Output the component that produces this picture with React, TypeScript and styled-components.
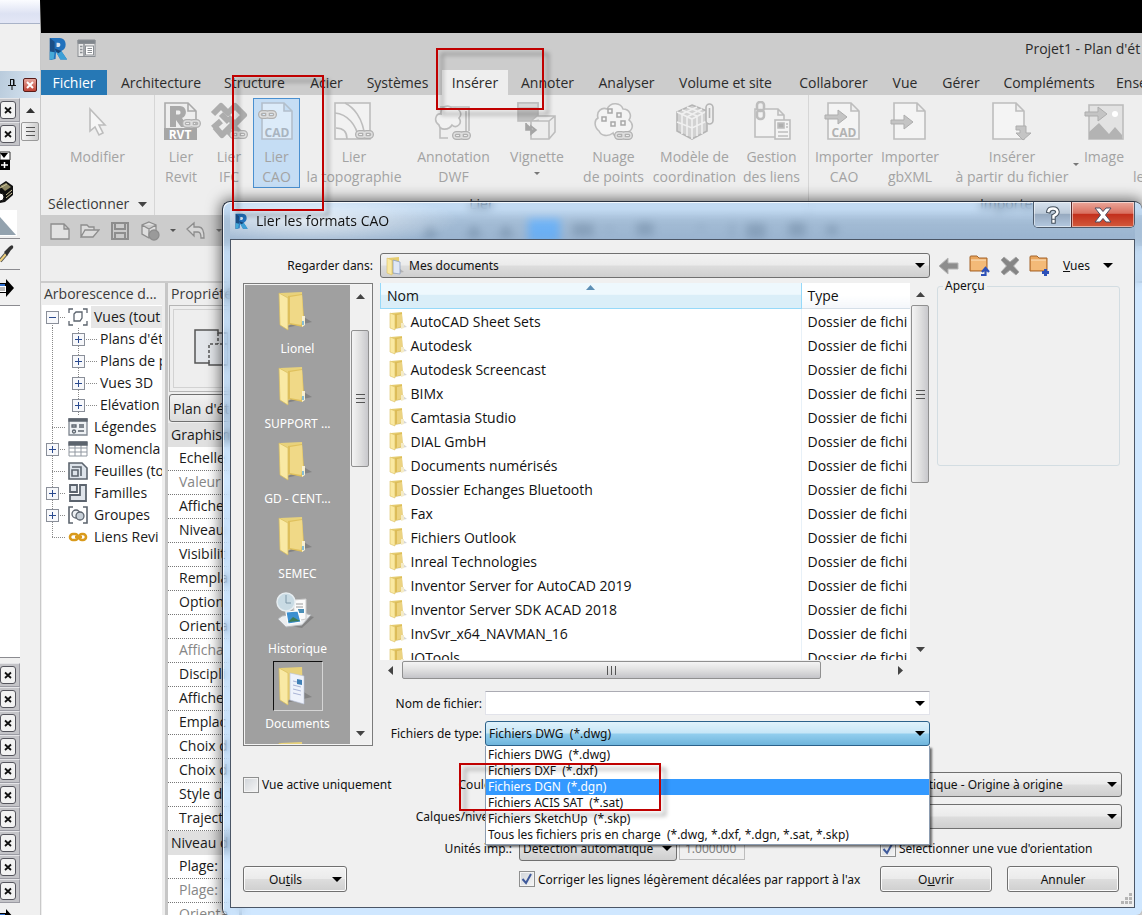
import React, { ReactNode } from "react";
import styled, { createGlobalStyle, css } from "styled-components";

const uiFont = `"Open Sans", "Noto Sans", sans-serif`;
const dialogFont = `"Noto Sans", "Open Sans", sans-serif`;

const GlobalStyle = createGlobalStyle`
  * { box-sizing: border-box; }
  body { margin: 0; font-family: ${uiFont}; font-size: 14px; color: #1a1a1a; }
  button, input, select { font: inherit; color: inherit; margin: 0; }
  button { padding: 0; border: 0; background: none; }
  ul { list-style: none; margin: 0; padding: 0; }
  svg { display: block; flex: none; }
`;

/* ---------- page shell ---------- */

const Page = styled.div`
  position: relative;
  display: flex;
  height: 100vh;
  overflow: hidden;
  background: #f0f0f0;
`;

const RevitWindow = styled.div`
  flex: 1;
  min-width: 0;
  display: flex;
  flex-direction: column;
  border-top: 33px solid #000;
  border-left: 1px solid #c9c9c9;
  background: #eee;
`;

/* ---------- left dock ---------- */

const Dock = styled.aside`
  width: 40px;
  flex: none;
  display: flex;
  flex-direction: column;
  background: #f0f0f0;
`;
const DockTop = styled.div`
  height: 24px;
  flex: none;
  background: linear-gradient(#fbfcff, #dde2f3 60%, #e3e7f6);
  border-bottom: 1px solid #a9b3c8;
`;
const DockHeader = styled.div`
  margin-top: 47px;
  height: 27px;
  flex: none;
  display: flex;
  align-items: center;
  justify-content: flex-end;
  gap: 7px;
  padding-right: 3px;
  background: linear-gradient(100deg, #b9cbdc, #d9e6f2);
`;
const DockClose = styled.button`
  width: 14px;
  height: 14px;
  display: grid;
  place-items: center;
  border: 1px solid #5a1c18;
  border-radius: 2px;
  background: linear-gradient(#e7a79d, #bf4436);
`;
const DockBody = styled.div`
  flex: 1;
  min-height: 0;
  display: flex;
`;
const DockList = styled.div`
  width: 20px;
  display: flex;
  flex-direction: column;
`;
const DockRow = styled.div`
  height: 24px;
  flex: none;
  padding: 2px 2px 2px 0;
  background: #c4c4c8;
  border: 1px solid #9b9ba3;
  border-left: 0;
  border-top-color: #e5e5e8;
`;
const DockRowButton = styled.button`
  width: 16px;
  height: 18px;
  display: grid;
  place-items: center;
  border: 1px solid #55555d;
  border-radius: 3px;
  background: #f2f2f2;
`;
const DockTool = styled.div<{ $h: number; $line?: boolean }>`
  height: ${(p) => p.$h}px;
  flex: none;
  display: flex;
  align-items: center;
  border-bottom: 1px solid ${(p) => (p.$line ? "#8b8b90" : "transparent")};
`;
const DockWell = styled.div`
  height: 352px;
  flex: none;
  margin-bottom: 5px;
  background: #fff;
  border-bottom: 1px solid #8b8b90;
`;
const DockScroll = styled.div`
  width: 20px;
  padding: 10px 1px 0;
  display: flex;
  flex-direction: column;
  align-items: center;
  gap: 9px;
`;
const DockThumb = styled.div`
  width: 18px;
  height: 19px;
  display: grid;
  place-items: center;
  background: linear-gradient(90deg, #f6f6f6, #cfcfcf);
  border: 1px solid #9a9a9a;
  border-radius: 2px;
`;

/* ---------- revit header and ribbon ---------- */

const TitleRow = styled.header`
  height: 37px;
  flex: none;
  display: flex;
  align-items: center;
  gap: 8px;
  padding: 0 0 6px 5px;
  background: #cccccc;
`;
const WindowTitle = styled.div`
  margin-left: auto;
  width: 117px;
  overflow: hidden;
  white-space: nowrap;
  color: #2b2b2b;
`;
const Tabs = styled.nav`
  height: 25px;
  flex: none;
  display: flex;
  overflow: hidden;
  background: #cccccc;
`;
const Tab = styled.button<{ $w: number; $kind?: "file" | "active" }>`
  width: ${(p) => p.$w}px;
  flex: none;
  text-align: center;
  white-space: nowrap;
  line-height: 25px;
  color: #2b2b2b;
  ${(p) => p.$kind === "file" && css`background: #2678b5; color: #fff; margin-right: 6px;`}
  ${(p) => p.$kind === "active" && css`background: #eee;`}
`;
const Ribbon = styled.div`
  height: 120px;
  flex: none;
  display: flex;
  overflow: hidden;
  background: #eee;
`;
const RibbonPanel = styled.section<{ $w?: number }>`
  ${(p) => (p.$w ? `width: ${p.$w}px;` : "")}
  flex: none;
  display: flex;
  flex-direction: column;
  padding: 3px 2px 0 2px;
  border-right: 1px solid #d6d6d6;
`;
const RibbonButtons = styled.div`
  display: flex;
  height: 95px;
`;
const RibbonTitle = styled.div<{ $left?: boolean }>`
  display: flex;
  align-items: center;
  justify-content: ${(p) => (p.$left ? "flex-start" : "center")};
  gap: 9px;
  padding-left: ${(p) => (p.$left ? 5 : 0)}px;
  line-height: 22px;
  color: #3a3a3a;
`;
const RibbonButton = styled.button<{ $w: number; $selected?: boolean }>`
  width: ${(p) => p.$w}px;
  height: 90px;
  flex: none;
  display: flex;
  flex-direction: column;
  align-items: center;
  padding-top: 2px;
  border: 1px solid ${(p) => (p.$selected ? "#4a90d0" : "transparent")};
  background: ${(p) => (p.$selected ? "#c5ddf4" : "none")};
  color: #a3a3a3;
  line-height: 20px;
  white-space: nowrap;
  & > svg { margin-bottom: 6px; }
`;
const RibbonLabel = styled.span`
  display: flex;
  align-items: center;
  flex-direction: column;
`;
const RibbonDrop = styled.button`
  width: 8px;
  flex: none;
  align-self: flex-start;
  margin: 65px 0 0 -8px;
`;
const LabelDrop = styled.span`
  margin-top: 5px;
`;
const QuickBar = styled.div`
  height: 31px;
  flex: none;
  display: flex;
  align-items: center;
  gap: 10px;
  padding-left: 9px;
  background: #cccccc;
`;
const Workspace = styled.div`
  flex: 1;
  min-height: 0;
  margin-top: 35px;
  display: flex;
  border-top: 2px solid #cbcbcb;
`;
const Panel = styled.section<{ $w: number }>`
  width: ${(p) => p.$w}px;
  flex: none;
  display: flex;
  flex-direction: column;
  overflow: hidden;
  border-right: 3px solid #c6c6c6;
`;
const PanelTitle = styled.h2`
  margin: 0;
  padding-left: 3px;
  font-size: 14px;
  font-weight: 400;
  line-height: 22px;
  white-space: nowrap;
  color: #3a3a3a;
`;
const Tree = styled.ul`
  flex: 1;
  margin: 0 3px 0 1px;
  padding-top: 1px;
  overflow: hidden;
  background: #fff;
`;
const TreeRow = styled.li<{ $selected?: boolean }>`
  height: 22px;
  display: flex;
  align-items: center;
  white-space: nowrap;
  & > span {
    flex: 1;
    line-height: 22px;
    margin-left: 3px;
    padding-left: 3px;
    background: ${(p) => (p.$selected ? "#e6e6e6" : "transparent")};
  }
`;
const ChildLabel = styled.span`
  && { margin-left: 0; padding-left: 2px; }
`;
const TypePreview = styled.div`
  height: 87px;
  flex: none;
  margin: 0 0 2px 1px;
  padding: 3px;
  border: 1px solid #b5b5b5;
  border-right: 0;
  & > div {
    height: 100%;
    padding: 19px 0 0 20px;
    border: 1px solid #d2d2d2;
    border-right: 0;
  }
`;
const TypeButton = styled.button`
  height: 28px;
  flex: none;
  margin: 0 0 1px 1px;
  padding-left: 3px;
  text-align: left;
  white-space: nowrap;
  border: 1px solid #707070;
  border-radius: 3px;
  background: linear-gradient(#f2f2f2, #dcdcdc);
`;
const PropGroup = styled.div`
  height: 24px;
  flex: none;
  padding-left: 3px;
  line-height: 24px;
  white-space: nowrap;
  background: #e0e0e0;
`;
const PropRow = styled.div<{ $muted?: boolean }>`
  height: 24px;
  flex: none;
  padding-left: 11px;
  line-height: 22px;
  white-space: nowrap;
  color: ${(p) => (p.$muted ? "#868686" : "#1a1a1a")};
  background: #fff;
  border-bottom: 1px dotted #777;
`;
const DrawingArea = styled.div`
  flex: 1;
  background: #fff;
`;

/* ---------- dialog ---------- */

const Dialog = styled.div`
  position: absolute;
  z-index: 2;
  inset: 201px 0 0 222px;
  display: flex;
  flex-direction: column;
  padding: 0 7px 7px 7px;
  font-family: ${dialogFont};
  font-size: 12px;
  color: #111;
  border: 1px solid #2b3340;
  border-width: 1px 0 0 1px;
  border-radius: 8px 8px 6px 6px;
  background: rgba(69, 161, 255, 0.26);
  backdrop-filter: blur(4px);
  box-shadow: inset 1px 1px 0 rgba(255, 255, 255, 0.8), 0 0 14px 2px rgba(0, 0, 0, 0.55);
`;
const DialogTitle = styled.div`
  height: 37px;
  flex: none;
  display: flex;
  align-items: center;
  gap: 7px;
  padding: 0 0 0 3px;
  font-family: ${uiFont};
  font-size: 14px;
  background:
    radial-gradient(ellipse 150px 26px at 80px 18px, rgba(255, 255, 255, 0.7), transparent),
    linear-gradient(transparent 20%, rgba(80, 115, 160, 0.16));
`;
const DialogButtons = styled.div`
  margin-left: auto;
  align-self: flex-start;
  display: flex;
  border: 1px solid #4d5b6c;
  border-top: 0;
  border-radius: 0 0 5px 5px;
  overflow: hidden;
`;
const CaptionButton = styled.button<{ $w: number; $danger?: boolean }>`
  width: ${(p) => p.$w}px;
  height: 25px;
  display: grid;
  place-items: center;
  border-left: ${(p) => (p.$danger ? "1px solid #5b2a2a" : "0")};
  background: ${(p) =>
    p.$danger
      ? "linear-gradient(#eba79a 0%, #d9705f 45%, #c3301c 50%, #d25a3c 100%)"
      : "linear-gradient(#d7e2ee 0%, #bccad9 45%, #97aac0 50%, #b4c9e0 100%)"};
  box-shadow: inset 0 0 0 1px rgba(255, 255, 255, 0.5);
`;
const Client = styled.div`
  flex: 1;
  min-height: 0;
  display: flex;
  flex-direction: column;
  padding: 13px 12px 15px 12px;
  background: #f0f0f0;
  border: 1px solid #4b5666;
`;
const LookRow = styled.div`
  flex: none;
  display: grid;
  grid-template-columns: 130px 1fr 185px;
  column-gap: 7px;
  align-items: center;
  margin-bottom: 5px;
`;
const FieldLabel = styled.label`
  text-align: right;
  white-space: nowrap;
`;
const LookTools = styled.div`
  display: flex;
  align-items: center;
  gap: 9px;
  padding-left: 1px;
`;
const ToolButton = styled.button`
  display: flex;
  align-items: center;
  gap: 13px;
`;
const ViewsButton = styled(ToolButton)`
  margin-left: 3px;
`;
const Main = styled.div`
  flex: 1;
  min-height: 0;
  display: grid;
  grid-template-columns: 130px 1fr 185px;
  column-gap: 7px;
  margin-bottom: 26px;
`;

const Places = styled.div`
  display: flex;
  min-height: 0;
  padding: 1px 2px 1px 1px;
  border: 1px solid #7c7c7c;
  background: #f4f4f4;
`;
const PlaceList = styled.ul`
  flex: 1;
  min-width: 0;
  overflow: hidden;
  padding-top: 1px;
  background: #a0a0a0;
`;
const Place = styled.li`
  display: flex;
  flex-direction: column;
  align-items: center;
  height: 75px;
  color: #fff;
  line-height: 26px;
`;
const PlaceIcon = styled.div<{ $selected?: boolean }>`
  width: 50px;
  height: 50px;
  flex: none;
  display: grid;
  align-items: center;
  justify-items: start;
  padding-left: 2px;
  border: 1px solid transparent;
  ${(p) => p.$selected && css`border-color: #111 #d5d5d5 #d5d5d5 #111;`}
`;
const VScroll = styled.div`
  width: 20px;
  flex: none;
  display: flex;
  flex-direction: column;
  align-items: center;
  background: #f0f0f0;
`;
const ScrollStep = styled.button`
  width: 20px;
  height: 22px;
  flex: none;
  display: grid;
  place-items: center;
`;
const Thumb = styled.div<{ $axis: "x" | "y"; $before: number; $size: number }>`
  flex: none;
  display: grid;
  place-items: center;
  border: 1px solid #909090;
  border-radius: 2px;
  ${(p) =>
    p.$axis === "y"
      ? css`
          width: 18px;
          height: ${p.$size}px;
          margin-top: ${p.$before}px;
          background: linear-gradient(90deg, #f4f4f4, #e2e2e2 45%, #c8c8cc);
        `
      : css`
          width: ${p.$size}%;
          height: 18px;
          margin-left: ${p.$before}px;
          background: linear-gradient(#f4f4f4, #e2e2e2 45%, #c4c4c8);
        `}
`;
const Spacer = styled.div`
  flex: 1;
`;
const HScroll = styled.div`
  height: 20px;
  flex: none;
  display: flex;
  align-items: center;
  padding-right: 20px;
  background: #f0f0f0;
`;

const Center = styled.div`
  display: flex;
  flex-direction: column;
  min-height: 0;
`;
const FileBox = styled.div`
  flex: 1;
  min-height: 0;
  display: flex;
  background: #fff;
`;
const FileScroller = styled.div`
  flex: 1;
  min-width: 0;
  overflow: hidden;
`;
const FileTable = styled.table`
  width: 100%;
  table-layout: fixed;
  border-collapse: collapse;
  font-family: ${uiFont};
  font-size: 14px;
  th {
    height: 25px;
    padding: 2px 6px 0;
    text-align: left;
    font-weight: 400;
    line-height: 22px;
    background: linear-gradient(#fff 50%, #f3f6fa);
    border-bottom: 1px solid #d5dfe8;
  }
  th:first-child {
    background: linear-gradient(#eef8fd 45%, #daeef8 50%);
    border-bottom: 1px solid #96d9f9;
    border-right: 1px solid #96d9f9;
    border-left: 1px solid #96d9f9;
  }
  td {
    height: 24px;
    padding: 0 0 0 6px;
    white-space: nowrap;
    overflow: hidden;
  }
  tbody tr:first-child td { height: 25px; padding-top: 1px; }
  td:first-child { border-right: 1px solid #e8f1f8; }
`;
const HeadCell = styled.div`
  display: grid;
  grid-template-columns: 1fr 10px 1fr;
  align-items: start;
`;
const NameCell = styled.div`
  display: flex;
  align-items: center;
  gap: 4px;
  padding-left: 2px;
`;

const NameRow = styled.div<{ $gap: number }>`
  position: relative;
  flex: none;
  display: grid;
  grid-template-columns: 102px 1fr;
  column-gap: 3px;
  align-items: center;
  margin-top: ${(p) => p.$gap}px;
`;
const Combo = styled.div<{ $look?: "plain" | "open"; $w?: number }>`
  height: ${(p) => (p.$look === "plain" ? 24 : 25)}px;
  ${(p) => (p.$w ? `width: ${p.$w}px;` : "")}
  min-width: 0;
  display: flex;
  align-items: center;
  padding: 0 4px 0 3px;
  border: 1px solid #707070;
  border-radius: 3px;
  background: linear-gradient(#f3f3f3, #ebebeb 48%, #dddddd 52%, #cfcfcf);
  ${(p) => p.$look === "plain" && css`background: #fff; border-color: #ababb3 #e2e3ea #e2e3ea; border-radius: 0;`}
  ${(p) =>
    p.$look === "open" &&
    css`
      background: linear-gradient(#e0f2fb, #c6e6f7 48%, #92ceee 52%, #6fb5dc);
      border-color: #2c628b;
    `}
  select, input {
    flex: 1;
    min-width: 0;
    width: 100%;
    height: 100%;
    padding: 0;
    appearance: none;
    border: 0;
    outline: 0;
    background: transparent;
  }
  & > svg:first-child { margin: 0 5px 0 2px; }
`;
const TypeMenu = styled.ul`
  position: absolute;
  z-index: 3;
  top: 25px;
  left: 105px;
  right: 0;
  padding: 1px 0;
  border: 1px solid #8c9cb0;
  border-top: 0;
  background: #fff;
  box-shadow: 2px 2px 2px rgba(0, 0, 0, 0.55);
`;
const TypeOption = styled.li<{ $active?: boolean }>`
  height: 16px;
  padding-left: 2px;
  line-height: 16px;
  white-space: pre;
  color: ${(p) => (p.$active ? "#fff" : "#111")};
  background: ${(p) => (p.$active ? "#3399ff" : "transparent")};
`;
const Preview = styled.fieldset`
  height: 187px;
  align-self: start;
  margin: -4px 2px 0 0;
  padding: 0;
  border: 1px solid #d3dde2;
  border-radius: 3px;
  legend { margin-left: 5px; padding: 0 2px; line-height: 14px; }
`;

const Options = styled.div<{ $gap: number }>`
  flex: none;
  display: grid;
  grid-template-columns: 269px 1fr 242px;
  column-gap: 7px;
  align-items: center;
  margin-top: ${(p) => p.$gap}px;
`;
const Cell = styled.div<{ $justify?: string; $gap?: number }>`
  min-width: 0;
  display: flex;
  align-items: center;
  justify-content: ${(p) => p.$justify || "flex-start"};
  gap: ${(p) => p.$gap || 0}px;
`;
const Check = styled.label`
  display: flex;
  align-items: center;
  gap: 3px;
  min-width: 0;
  white-space: nowrap;
  input {
    appearance: none;
    width: 16px;
    height: 16px;
    flex: none;
    border: 1px solid #8e8f8f;
    outline: 1px solid #f4f4f4;
    outline-offset: -2px;
    background: linear-gradient(135deg, #d0d4d9, #f6f6f6);
  }
  svg { margin: 0 1px 0 -18px; }
`;
const ScaleInput = styled.input`
  width: 66px;
  height: 22px;
  padding: 0 5px;
  color: #838383;
  border: 1px solid #bcbcbc;
  background: #f0f0f0;
`;
const PushButton = styled.button<{ $w: number }>`
  width: ${(p) => p.$w}px;
  height: 26px;
  display: flex;
  align-items: center;
  justify-content: center;
  border: 1px solid #707070;
  border-radius: 3px;
  background: linear-gradient(#f3f3f3, #ebebeb 48%, #dddddd 52%, #cfcfcf);
  box-shadow: inset 0 0 0 1px #fbfbfb;
`;
const ToolsButton = styled(PushButton)`
  justify-content: space-between;
  padding: 0 4px 0 25px;
`;
const GripHolder = styled.div`
  position: absolute;
  right: 9px;
  bottom: 10px;
`;
const Highlight = styled.div<{ $x: number; $y: number; $w: number; $h: number }>`
  position: absolute;
  z-index: 5;
  left: ${(p) => p.$x}px;
  top: ${(p) => p.$y}px;
  width: ${(p) => p.$w}px;
  height: ${(p) => p.$h}px;
  border: 2px solid #c00000;
  pointer-events: none;
  filter: drop-shadow(5px 5px 2px rgba(0, 0, 0, 0.35));
`;

/* ---------- icons ---------- */

const Arrow = ({ dir = "down", w = 10, fill = "#000" }: { dir?: "down" | "up" | "left" | "right"; w?: number; fill?: string }) => {
  const h = Math.ceil(w / 2);
  const vertical = dir === "down" || dir === "up";
  const d = {
    down: `M0 0H${w}L${w / 2} ${h}Z`,
    up: `M0 ${h}H${w}L${w / 2} 0Z`,
    left: `M${h} 0V${w}L0 ${w / 2}Z`,
    right: `M0 0V${w}L${h} ${w / 2}Z`,
  }[dir];
  return (
    <svg width={vertical ? w : h} height={vertical ? h : w}>
      <path d={d} fill={fill} />
    </svg>
  );
};

const Cross = () => (
  <svg width="8" height="8" viewBox="0 0 8 8">
    <path d="M1 1.5 7 7M7 1.5 1 7" stroke="#111" strokeWidth="1.8" />
  </svg>
);

const Grip = ({ vertical }: { vertical?: boolean }) => (
  <svg width="9" height="9" viewBox="0 0 9 9" stroke="#555">
    <path d={vertical ? "M.5 0V9M4.5 0V9M8.5 0V9" : "M0 .5H9M0 4.5H9M0 8.5H9"} />
  </svg>
);

const RevitLogo = ({ size }: { size: number }) => (
  <svg width={size} height={size} viewBox="0 0 22 24">
    <path d="M3 1H11C17 1 19.500 3 19.500 8 19.500 11.500 17.500 13.500 15 14.500L21 23.500H14L9.500 15.500 9 23 3 24Z" fill="#2272bd" />
    <path d="M3 1 8 5V15L6 23 3 24Z" fill="#1b4f86" />
    <path d="M9 15 15 14.500 21 23.500H14Z" fill="#3c9fd6" />
    <path d="M3 15 8 16 7 23 3 24Z" fill="#45a9d8" />
    <path d="M10 6H11.500C13.500 6 14 7 14 8 14 9.500 13 10.500 11.500 10.500H10Z" fill="#dbe6f0" />
    <path d="M8 12 15 14.500 12 17 9.500 15.500Z" fill="#174678" />
  </svg>
);

const AppMenuIcon = () => (
  <svg width="19" height="19" viewBox="0 0 19 19" fill="none" stroke="#8b8f94">
    <rect x="1" y="1.500" width="17" height="16" fill="#e9e9e9" />
    <path d="M1 1H18V4.500H1Z" fill="#80868c" />
    <path d="M3 7.500H5.500M3 10.500H5.500M3 13.500H5.500M7 5V17" strokeWidth="1.500" />
    <rect x="8.500" y="7" width="8" height="9" fill="#fff" />
    <path d="M10.500 9.500H15M10.500 11.500H15M10.500 13.500H15" />
  </svg>
);

const Chain = ({ x, y }: { x: number; y: number }) => (
  <g transform={`translate(${x} ${y})`} fill="none">
    <g stroke="#b0b0b0" strokeWidth="4">
      <rect x="2" y="2" width="8" height="5" rx="2.500" />
      <rect x="9" y="2" width="8" height="5" rx="2.500" />
    </g>
    <g stroke="#dedede" strokeWidth="1.500">
      <rect x="2" y="2" width="8" height="5" rx="2.500" />
      <rect x="9" y="2" width="8" height="5" rx="2.500" />
    </g>
  </g>
);

const G = "#bdbdbd";
const Ico = ({ children }: { children: ReactNode }) => (
  <svg width="40" height="40" viewBox="0 0 40 40" fill="none" stroke={G} strokeWidth="1.600">
    {children}
  </svg>
);

const SheetShape = () => <path d="M4 2H27L35 10V38H4ZM27 2V10H35" fill="#f4f4f4" />;
const IconText = ({ x, y, children, fill = "#b2b2b2" }: { x: number; y: number; children: string; fill?: string }) => (
  <text x={x} y={y} fill={fill} stroke="none" fontFamily="Open Sans, sans-serif" fontWeight="700" fontSize="12" textAnchor="middle">
    {children}
  </text>
);
const InArrow = ({ x, y }: { x: number; y: number }) => (
  <path d={`M${x} ${y - 2}h13v-5l9 7-9 7v-5h-13z`} fill="#c4c4c4" stroke="#adadad" strokeWidth="1" />
);

const icons: Record<string, ReactNode> = {
  cursor: (
    <Ico>
      <path d="M12 8V30L17 26 21 34 25 32 21 24H27Z" fill="#f6f6f6" />
    </Ico>
  ),
  rvt: (
    <Ico>
      <path d="M4 2H27L35 10V38H4ZM27 2V10H35" fill="#eee" stroke="#aaa" />
      <path d="M9 5H19C26 5 27 15 21 17L27 26H20L15 19V26H9ZM15 9.500V13.500H18C20 13.500 20 9.500 18 9.500Z" fill="#a9a9a9" stroke="none" fillRule="evenodd" />
      <rect x="3" y="27" width="33" height="12" fill="#a6a6a6" stroke="none" />
      <IconText x={19} y={38} fill="#fff">RVT</IconText>
      <Chain x={21} y={18} />
    </Ico>
  ),
  ifc: (
    <Ico>
      <g stroke="#adadad" strokeWidth="6" strokeLinejoin="round">
        <path d="M4 13 12 5 19 12 26 5 35 14 26 23 19 16" />
        <path d="M12 13 20 21M12 20 4 27M6 26 13 34 23 24 31 32M19 30 24 35" />
      </g>
      <Chain x={20} y={29} />
    </Ico>
  ),
  cad: (
    <Ico>
      <path d="M5 2H27L35 10V38H5ZM27 2V10H35" fill="#dcebf9" stroke="#b3bfcb" />
      <IconText x={20} y={36} fill="#a9b4c0">CAD</IconText>
      <Chain x={1} y={9} />
    </Ico>
  ),
  topo: (
    <Ico>
      <rect x="1" y="2" width="35" height="36" fill="#f2f2f2" />
      <path d="M11 2C19 6 29 16 31 37M1 12C13 13 23 24 24 37M2 27C10 27 13 32 13 38" />
      <Chain x={21} y={29} />
    </Ico>
  ),
  dwf: (
    <Ico>
      <path d="M6 6H35V30M6 22V37H14M32 10V34" />
      <path d="M5 24C-1 20 2 12 7 13 6 5 15 3 18 8 25 5 29 13 25 17 29 23 22 28 18 24 15 29 6 30 5 24Z" fill="#f2f2f2" />
      <Chain x={18} y={30} />
    </Ico>
  ),
  vignette: (
    <Ico>
      <rect x="1" y="2" width="20" height="18" fill="#c2c2c2" />
      <path d="M1 2H21V7H1Z" fill="#d8d8d8" />
      <path d="M14 20 20 15H38V31L32 38H14ZM32 20V38M14 20H32L38 15" fill="#ededed" />
      <path d="M9 22V29H17M14 25 19 29 14 33Z" stroke="#a5a5a5" fill="#a5a5a5" />
    </Ico>
  ),
  nuage: (
    <Ico>
      <path d="M5 30C0 26 0 19 4 17 2 10 8 6 13 8 17 0 27 2 29 8 36 8 38 15 35 19 41 24 38 31 32 31 28 38 20 36 19 32 14 36 7 35 5 30Z" fill="#f4f4f4" />
      <g stroke="#a8a8a8" strokeWidth="1.500">
        <path d="M14 8h4v4h-4zM23 12h4v4h-4zM8 16h4v4H8zM17 21h4v4h-4zM27 20h4v4h-4z" />
      </g>
      <Chain x={20} y={30} />
    </Ico>
  ),
  modele: (
    <Ico>
      <path d="M17 4 32 10V30L17 38 2 30V11Z" fill="#d2d2d2" stroke="#b5b5b5" />
      <path d="M17 18V38M2 11 17 18 32 10M2 21 17 27 32 20M7 14V33M12 16V35M22 16V35M27 13V33M7 9 22 15M12 6 27 12M12 16 27 8M7 13 22 6" stroke="#f0f0f0" />
      <rect x="31" y="3" width="7" height="20" rx="3.500" fill="#eee" stroke="#b5b5b5" />
      <path d="M34.500 7V17" stroke="#b5b5b5" />
    </Ico>
  ),
  gestion: (
    <Ico>
      <path d="M3 8H26L32 14V36H3ZM26 8V14H32" fill="#f2f2f2" />
      <rect x="5" y="1" width="7" height="9" rx="3" fill="#eee" strokeWidth="2.500" />
      <rect x="5" y="9" width="7" height="9" rx="3" strokeWidth="2.500" />
      <rect x="23" y="19" width="15" height="19" fill="#f4f4f4" />
      <path d="M26 22h6v5h-6z" fill="#b0b0b0" />
      <path d="M34 23h2M34 26h2M26 31h10M26 35h10" />
    </Ico>
  ),
  importCad: (
    <Ico>
      <SheetShape />
      <IconText x={20} y={36}>CAD</IconText>
      <InArrow x={1} y={16} />
    </Ico>
  ),
  importXml: (
    <Ico>
      <SheetShape />
      <InArrow x={1} y={21} />
    </Ico>
  ),
  insertFile: (
    <Ico>
      <path d="M1 2H24L32 10V38H1ZM24 2V10H32" fill="#f4f4f4" />
      <path d="M24 25H34V32H39L31 39 24 32H28V29H24Z" fill="#c4c4c4" stroke="#adadad" strokeWidth="1" />
    </Ico>
  ),
  image: (
    <Ico>
      <rect x="5" y="4" width="34" height="34" fill="#e2e2e2" />
      <path d="M5 31 15 22 25 33 31 26 38 34V38H5Z" fill="#b3b3b3" stroke="none" />
      <circle cx="31" cy="13" r="3" fill="#fff" stroke="none" />
      <InArrow x={1} y={13} />
    </Ico>
  ),
  manage: (
    <Ico>
      <rect x="4" y="4" width="32" height="32" />
    </Ico>
  ),
};

const QIcon = ({ children }: { children: ReactNode }) => (
  <svg width="20" height="20" viewBox="0 0 20 20" fill="none" stroke="#8d8d8d" strokeWidth="1.300">
    {children}
  </svg>
);

const FolderLarge = ({ docs }: { docs?: boolean }) => (
  <svg width="36" height="42" viewBox="0 0 36 42">
    <path d="M10 38 36 32 26 26Z" fill="#000" opacity=".18" />
    <path d="M4 3 26 2 27 31 12 35Z" fill="#e8d27c" />
    {docs && (
      <g>
        <path d="M14 8 28 11V39L14 35Z" fill="#eef2fb" stroke="#b9c2d8" strokeWidth=".6" />
        <path d="M17 16 25 18M17 20 25 22M17 24 25 26M17 28 25 30" stroke="#aab4d6" />
        <path d="M21 14 26 15V20L21 19Z" fill="#3f7fb5" />
      </g>
    )}
    {!docs && <path d="M12 6 26 4 28 27 27 37 12 34Z" fill="#dfc05c" />}
    {!docs && <path d="M14 7 26 5 27 26 25 35 14 33Z" fill="#f0d987" />}
    <path d="M3 3 12 8V40L4 35Z" fill="#f9e9a4" stroke="#d9bd5c" strokeWidth=".7" />
    {!docs && <path d="M26 26H29V35L26 37Z" fill="#f7f0d2" />}
    {!docs && <path d="M27 31V35" stroke="#3b9bd8" strokeWidth="1.200" />}
  </svg>
);

const FolderSmall = ({ docs }: { docs?: boolean }) => (
  <svg width="18" height="20" viewBox="0 0 18 20">
    <path d="M6 18 18 16 13 12Z" fill="#000" opacity=".16" />
    <path d="M2 2 13 1V16L6 18Z" fill="#e5cc70" />
    {docs ? <path d="M7 4 14 6V18L7 17Z" fill="#dfe7f5" stroke="#8c9fc0" strokeWidth=".8" /> : <path d="M6 3 13 2 14 16 6 17Z" fill="#dcbc58" />}
    {!docs && <path d="M8 4 13 3V15L8 17Z" fill="#ecd380" />}
    <path d="M1 2 6 4V19L1 17Z" fill="#fae9a2" stroke="#dcc062" strokeWidth=".6" />
    {!docs && <path d="M12 12H15V17L12 18Z" fill="#f5ecc8" />}
  </svg>
);

const HistoryIcon = () => (
  <svg width="38" height="40" viewBox="0 0 38 40">
    <path d="M8 34 26 37 38 26 30 24Z" fill="#000" opacity=".18" />
    <path d="M2 28 10 36 26 34 35 24 28 22 6 25Z" fill="#eceef0" stroke="#b3b6ba" />
    <path d="M17 9 30 8V28L19 30Z" fill="#fbfbfb" stroke="#ccc" />
    <path d="M20 13H27M20 16H27" stroke="#999" />
    <path d="M22 18H28V22H22Z" fill="#4a8fb8" />
    <circle cx="10" cy="11" r="9" fill="#c9dbe4" stroke="#e6edf1" strokeWidth="1.500" />
    <path d="M10 4V12H15" stroke="#7f98a8" fill="none" />
    <path d="M10 21 22 20 25 31 12 33Z" fill="#3c8fd0" stroke="#fff" strokeWidth="1.200" />
    <path d="M12 31 17 26 24 30Z" fill="#3d7d56" />
  </svg>
);

const BackIcon = () => (
  <svg width="22" height="20" viewBox="0 0 22 20">
    <path d="M1 10 10 2V7H20V13H10V18Z" fill="#8d8d8d" stroke="#b5b5b5" />
  </svg>
);
const DeleteIcon = () => (
  <svg width="20" height="20" viewBox="0 0 20 20">
    <path d="M1 4 4 1 10 6 16 1 19 4 13.500 10 19 16 16 19 10 14 4 19 1 16 6.500 10Z" fill="#858585" stroke="#a9a9a9" />
  </svg>
);
const ToolFolder = ({ plus }: { plus?: boolean }) => (
  <svg width="22" height="22" viewBox="0 0 22 22">
    <path d="M1 2Q1 1 2 1H8L10 3H18V16H1Z" fill="#e9a55c" stroke="#a5652a" />
    <path d="M2 5H17V15H2Z" fill="#f3ba78" />
    <path d="M2 5H17" stroke="#fbe3c2" />
    {plus ? <path d="M13 17.500H20M16.500 14V21" stroke="#2c50b8" strokeWidth="3" /> : <path d="M12 20H16.500V14M13 17 16.500 13 20 17" stroke="#2c50b8" strokeWidth="2.200" fill="none" />}
  </svg>
);

const Guide = ({ level, box, last }: { level: 0 | 1; box?: "plus" | "minus"; last?: boolean }) => {
  const cx = level ? 36 : 10;
  const w = level ? 56 : 26;
  return (
    <svg width={w} height="22" viewBox={`0 0 ${w} 22`} fill="none">
      <g stroke="#8a8a8a" strokeDasharray="1 1">
        <path d={`M10.500 ${box === "minus" ? 11 : 0}V${last ? 11 : 22}`} />
        {level === 1 && <path d="M36.500 0V22" />}
        <path d={`M${cx} 11.500H${level ? 55 : 24}`} />
      </g>
      {box && (
        <g>
          <rect x={cx - 5.5} y="5.500" width="12" height="12" fill="#f7f8fb" stroke="#8a8f99" />
          <path d={`M${cx - 3} 11.500H${cx + 4}${box === "plus" ? `M${cx + 0.5} 8V15` : ""}`} stroke="#2a4a8f" />
        </g>
      )}
    </svg>
  );
};

const treeIcons: Record<string, ReactNode> = {
  views: <path d="M5 2H1V6M15 2H19V6M1 14V18H5M19 14V18H15M6 7 8 5H14V11L12 14H6Z" />,
  legend: (
    <g>
      <path d="M1 2H19V18H1Z" fill="#eef1f4" stroke="#7d858f" />
      <path d="M1 2H19V4H1Z" fill="#5c646e" />
      <path d="M4 8H8V10H4ZM11 8H16M11 10H16M10 14H16" />
      <circle cx="6" cy="14.500" r="1.500" />
    </g>
  ),
  table: (
    <g>
      <path d="M1 3H19V17H1ZM1 9H19M1 13H19M7 5V17M13 5V17" fill="#fff" stroke="#9097a0" strokeWidth="1" />
      <path d="M1 3H19V6H1Z" fill="#5c646e" />
    </g>
  ),
  sheet: <path d="M1 2H14L19 7V18H1ZM4 6H13V15M4 9H10V15H4Z" fill="#dde3ea" strokeWidth="1.600" />,
  family: <path d="M2 2H9V9H2ZM12 2H18V18H2V12H12Z" fill="#dfe4ea" strokeWidth="1.800" />,
  group: (
    <g>
      <path d="M5 2H1V18H5M15 2H19V18H15" strokeWidth="1.600" />
      <circle cx="8" cy="9" r="4" fill="#eef1f4" />
      <circle cx="12" cy="11" r="4" fill="#c8d0d8" />
    </g>
  ),
  link: (
    <g stroke="#d99a1c" strokeWidth="2.600">
      <rect x="2" y="7" width="8" height="6" rx="3" />
      <rect x="11" y="7" width="7" height="6" rx="3" />
      <path d="M7 10H14" />
    </g>
  ),
};
const TreeIcon = ({ name }: { name: string }) => (
  <svg width="20" height="20" viewBox="0 0 20 20" fill="none" stroke="#5c646e" strokeWidth="1.300">
    {treeIcons[name]}
  </svg>
);

/* ---------- data ---------- */

const tabs: [string, number, ("file" | "active")?][] = [
  ["Fichier", 66, "file"],
  ["Architecture", 96],
  ["Structure", 91],
  ["Acier", 53],
  ["Systèmes", 89],
  ["Insérer", 66, "active"],
  ["Annoter", 79],
  ["Analyser", 79],
  ["Volume et site", 119],
  ["Collaborer", 97],
  ["Vue", 46],
  ["Gérer", 66],
  ["Compléments", 110],
  ["Ensemble", 88],
];

type RB = [icon: string, lines: string[], width: number, selected?: boolean];
const linkButtons: RB[] = [
  ["rvt", ["Lier", "Revit"], 48],
  ["ifc", ["Lier", "IFC"], 48],
  ["cad", ["Lier", "CAO"], 47, true],
  ["topo", ["Lier", "la topographie"], 108],
  ["dwf", ["Annotation", "DWF"], 91],
  ["vignette", ["Vignette"], 76],
  ["nuage", ["Nuage", "de points"], 77],
  ["modele", ["Modèle de", "coordination"], 85],
  ["gestion", ["Gestion", "des liens"], 69],
];
const importButtons: RB[] = [
  ["importCad", ["Importer", "CAO"], 66],
  ["importXml", ["Importer", "gbXML"], 66],
  ["insertFile", ["Insérer", "à partir du fichier"], 138],
  ["image", ["Image"], 46],
  ["manage", ["Gérer", "les images"], 80],
];

const tree: { level: 0 | 1; label: string; icon?: string; box?: "plus" | "minus"; last?: boolean; selected?: boolean }[] = [
  { level: 0, label: "Vues (tout", icon: "views", box: "minus", selected: true },
  { level: 1, label: "Plans d'ét", box: "plus" },
  { level: 1, label: "Plans de p", box: "plus" },
  { level: 1, label: "Vues 3D", box: "plus" },
  { level: 1, label: "Elévation", box: "plus" },
  { level: 0, label: "Légendes", icon: "legend" },
  { level: 0, label: "Nomencla", icon: "table", box: "plus" },
  { level: 0, label: "Feuilles (to", icon: "sheet" },
  { level: 0, label: "Familles", icon: "family", box: "plus" },
  { level: 0, label: "Groupes", icon: "group", box: "plus" },
  { level: 0, label: "Liens Revi", icon: "link", last: true },
];

const props: [string, ("group" | "muted")?][] = [
  ["Graphism", "group"],
  ["Echelle"],
  ["Valeur", "muted"],
  ["Affiche"],
  ["Niveau"],
  ["Visibilit"],
  ["Rempla"],
  ["Option"],
  ["Orienta"],
  ["Afficha", "muted"],
  ["Discipli"],
  ["Affiche"],
  ["Emplac"],
  ["Choix d"],
  ["Choix d"],
  ["Style d"],
  ["Traject"],
  ["Niveau d", "group"],
  ["Plage:"],
  ["Plage:", "muted"],
  ["Orienta", "muted"],
];

const files = [
  "AutoCAD Sheet Sets", "Autodesk", "Autodesk Screencast", "BIMx", "Camtasia Studio", "DIAL GmbH",
  "Documents numérisés", "Dossier Echanges Bluetooth", "Fax", "Fichiers Outlook", "Inreal Technologies",
  "Inventor Server for AutoCAD 2019", "Inventor Server SDK ACAD 2018", "InvSvr_x64_NAVMAN_16", "JQTools",
];

const fileTypes = [
  "Fichiers DWG  (*.dwg)", "Fichiers DXF  (*.dxf)", "Fichiers DGN  (*.dgn)", "Fichiers ACIS SAT  (*.sat)",
  "Fichiers SketchUp  (*.skp)", "Tous les fichiers pris en charge  (*.dwg, *.dxf, *.dgn, *.sat, *.skp)",
];

const places = ["Lionel", "SUPPORT ...", "GD - CENT...", "SEMEC", "Historique", "Documents", ""];

/* ---------- parts ---------- */

const CheckBox = ({ label, checked }: { label: string; checked?: boolean }) => (
  <Check>
    <input type="checkbox" defaultChecked={checked} />
    {checked && (
      <svg width="14" height="14" viewBox="0 0 14 14">
        <path d="M2.500 7 6 11 11 2" fill="none" stroke="#3f5a9b" strokeWidth="2" />
      </svg>
    )}
    <span>{label}</span>
  </Check>
);

const RibbonItem = ({ item: [icon, lines, w, selected] }: { item: RB }) => (
  <>
    <RibbonButton $w={w} $selected={selected}>
      {icons[icon]}
      <RibbonLabel>
        {lines.map((l) => (
          <span key={l}>{l}</span>
        ))}
      </RibbonLabel>
      {icon === "vignette" && (
        <LabelDrop>
          <Arrow w={6} fill="#777" />
        </LabelDrop>
      )}
    </RibbonButton>
    {icon === "insertFile" && (
      <RibbonDrop aria-label="Options d'insertion">
        <Arrow w={6} fill="#777" />
      </RibbonDrop>
    )}
  </>
);

const DockRows = ({ count }: { count: number }) => (
  <>
    {Array.from({ length: count }, (_, i) => (
      <DockRow key={i}>
        <DockRowButton aria-label="Fermer">
          <Cross />
        </DockRowButton>
      </DockRow>
    ))}
  </>
);

const DockArrow = () => (
  <svg width="14" height="20" viewBox="0 0 14 20">
    <path d="M0 5H6V1L14 10 6 19V15H0Z" fill="#000" />
    <path d="M0 6H5V8H0Z" fill="#2d6fd0" />
    <path d="M0 8H6V14H0Z" fill="#fff" />
    <path d="M0 10H5M0 12H5" stroke="#777" />
  </svg>
);

const LeftDock = () => (
  <Dock>
    <DockTop />
    <DockHeader>
      <svg width="8" height="11" viewBox="0 0 8 11" fill="none" stroke="#111">
        <path d="M2 .5H6V6M2.500 0V6M0 6.500H8M4 7V11M5.500 0V6" />
      </svg>
      <DockClose aria-label="Fermer">
        <svg width="8" height="8" viewBox="0 0 8 8">
          <path d="M1 1 7 7M7 1 1 7" stroke="#fff" strokeWidth="2" />
        </svg>
      </DockClose>
    </DockHeader>
    <DockBody>
      <DockList>
        <DockRows count={2} />
        <DockTool $h={30}>
          <svg width="11" height="20" viewBox="0 0 11 20">
            <path d="M0 1H10V9H0Z" fill="#fff" stroke="#333" />
            <path d="M0 2H8L4 7Z" />
            <path d="M0 9H10V19H0Z" />
            <path d="M1 14H8M4.500 11V17" stroke="#fff" strokeWidth="1.500" />
          </svg>
        </DockTool>
        <DockTool $h={32}>
          <svg width="14" height="24" viewBox="0 0 14 24">
            <path d="M0 5 6 1 13 6V15L5 22 0 23Z" fill="#111" />
            <path d="M0 6 6 3 11 7 5 11Z" fill="#8d8762" />
            <path d="M0 8 7 4M6 15 12 10M6 18 12 13" stroke="#cfc59a" />
            <circle cx="0" cy="17" r="4" fill="#fff" stroke="#111" />
          </svg>
        </DockTool>
        <DockTool $h={31} $line>
          <svg width="18" height="26" viewBox="0 0 18 26">
            <path d="M0 0H17V26H0Z" fill="#fff" />
            <path d="M0 7 16 25H0Z" fill="#93a2ae" />
          </svg>
        </DockTool>
        <DockTool $h={31} $line>
          <svg width="14" height="20" viewBox="0 0 14 20">
            <path d="M0 17 6 10" stroke="#555" strokeWidth="4" />
            <path d="M0 17 6 10" stroke="#f1d27c" strokeWidth="2" />
            <path d="M4 8 9 3Q12 0 13 2 14 4 11 6L7 12Z" fill="#333" />
          </svg>
        </DockTool>
        <DockTool $h={36} $line>
          <DockArrow />
        </DockTool>
        <DockWell />
        <DockRows count={10} />
        <DockTool $h={30}>
          <DockArrow />
        </DockTool>
      </DockList>
      <DockScroll>
        <Arrow dir="up" w={9} fill="#333" />
        <DockThumb>
          <Grip />
        </DockThumb>
      </DockScroll>
    </DockBody>
  </Dock>
);

const Revit = () => (
  <RevitWindow>
    <TitleRow>
      <RevitLogo size={23} />
      <AppMenuIcon />
      <WindowTitle>Projet1 - Plan d'ét</WindowTitle>
    </TitleRow>
    <Tabs>
      {tabs.map(([label, w, kind]) => (
        <Tab key={label} $w={w} $kind={kind}>
          {label}
        </Tab>
      ))}
    </Tabs>
    <Ribbon>
      <RibbonPanel $w={114}>
        <RibbonButtons>
          <RibbonItem item={["cursor", ["Modifier"], 109]} />
        </RibbonButtons>
        <RibbonTitle $left>
          Sélectionner <Arrow w={9} fill="#444" />
        </RibbonTitle>
      </RibbonPanel>
      <RibbonPanel>
        <RibbonButtons>
          {linkButtons.map((b) => (
            <RibbonItem key={b[0]} item={b} />
          ))}
        </RibbonButtons>
        <RibbonTitle>Lier</RibbonTitle>
      </RibbonPanel>
      <RibbonPanel>
        <RibbonButtons>
          {importButtons.map((b) => (
            <RibbonItem key={b[0]} item={b} />
          ))}
        </RibbonButtons>
        <RibbonTitle>Importer</RibbonTitle>
      </RibbonPanel>
    </Ribbon>
    <QuickBar>
      <QIcon>
        <path d="M1 3H14L19 8V18H1ZM14 3V8H19" fill="#e2e2e2" />
      </QIcon>
      <QIcon>
        <path d="M1 16V4H7L9 6H14V9M1 16 5 9H19L13 16Z" fill="#dcdcdc" />
      </QIcon>
      <QIcon>
        <path d="M2 2H18V18H2ZM5 2V8H15V2M5 18V12H15V18" fill="#c9c9c9" strokeWidth="2" />
      </QIcon>
      <QIcon>
        <path d="M9 1 16 4V12L9 17 2 13V4ZM2 4 9 8 16 4M9 8V17" fill="#dedede" />
        <circle cx="14" cy="14" r="5" fill="#9a9a9a" />
      </QIcon>
      <Arrow w={6} fill="#555" />
      <QIcon>
        <path d="M1 8 8 2V6H13Q18 6 18 17H15Q15 11 12 11H8V15Z" fill="#d6d6d6" />
      </QIcon>
      <Arrow w={6} fill="#777" />
      {[190, 14, 2].map((gap) => (
        <svg key={gap} width={gap + 20} height="20">
          <path d={`M${gap} 16 ${gap + 8} 4 ${gap + 16} 16Z`} fill="#999" />
        </svg>
      ))}
      <svg width="330" height="24">
        <path d="M0 0H32V24H0Z" fill="#7fc0ff" />
        <path d="M46 6H64V16H46ZM78 10H84M110 5H124V15H110ZM170 8H176M204 4V18M220 6H236V18H220ZM262 5H276V16H262ZM300 8H308V14H300Z" fill="#aaa" stroke="#999" strokeWidth="2" />
      </svg>
    </QuickBar>
    <Workspace>
      <Panel $w={127}>
        <PanelTitle>Arborescence d...</PanelTitle>
        <Tree>
          {tree.map((t) => (
            <TreeRow key={t.label} $selected={t.selected}>
              <Guide level={t.level} box={t.box} last={t.last} />
              {t.icon && <TreeIcon name={t.icon} />}
              {t.level ? <ChildLabel>{t.label}</ChildLabel> : <span>{t.label}</span>}
            </TreeRow>
          ))}
        </Tree>
      </Panel>
      <Panel $w={74}>
        <PanelTitle>Propriétés</PanelTitle>
        <TypePreview>
          <div>
            <svg width="34" height="38" viewBox="0 0 34 38" fill="#e3e6ea" stroke="#555" strokeWidth="1.500">
              <path d="M1 1H24V4H34V36H15V34H1Z" />
              <path d="M15 34V15H34M24 4V15" strokeDasharray="3 2" fill="none" />
            </svg>
          </div>
        </TypePreview>
        <TypeButton>Plan d'ét</TypeButton>
        {props.map(([label, kind], i) =>
          kind === "group" ? <PropGroup key={i}>{label}</PropGroup> : <PropRow key={i} $muted={kind === "muted"}>{label}</PropRow>
        )}
      </Panel>
      <DrawingArea />
    </Workspace>
  </RevitWindow>
);

const LinkDialog = () => (
  <Dialog role="dialog" aria-label="Lier les formats CAO">
    <DialogTitle>
      <RevitLogo size={16} />
      <span>Lier les formats CAO</span>
      <DialogButtons>
        <CaptionButton $w={37} aria-label="Aide">
          <svg width="14" height="18" viewBox="0 0 14 18" fill="none" strokeLinecap="square">
            <path d="M2.500 5Q3 2.500 7 2.500T11.500 6Q11.500 8 7.500 10V11.500M7.500 15V15.500" stroke="#46525f" strokeWidth="4.500" />
            <path d="M2.500 5Q3 2.500 7 2.500T11.500 6Q11.500 8 7.500 10V11.500M7.500 15V15.500" stroke="#fff" strokeWidth="2.400" />
          </svg>
        </CaptionButton>
        <CaptionButton $w={63} $danger aria-label="Fermer">
          <svg width="18" height="16" viewBox="0 0 18 16">
            <path d="M1 1H6L9 4.500 12 1H17L11.500 8 17 15H12L9 11.500 6 15H1L6.500 8Z" fill="#fff" stroke="#4c4f63" />
          </svg>
        </CaptionButton>
      </DialogButtons>
    </DialogTitle>
    <Client>
      <LookRow>
        <FieldLabel htmlFor="look">Regarder dans:</FieldLabel>
        <Combo>
          <FolderSmall docs />
          <select id="look">
            <option>Mes documents</option>
          </select>
          <Arrow />
        </Combo>
        <LookTools>
          <ToolButton aria-label="Précédent"><BackIcon /></ToolButton>
          <ToolButton aria-label="Dossier parent"><ToolFolder /></ToolButton>
          <ToolButton aria-label="Supprimer"><DeleteIcon /></ToolButton>
          <ToolButton aria-label="Nouveau dossier"><ToolFolder plus /></ToolButton>
          <ViewsButton>
            <span><u>V</u>ues</span>
            <Arrow />
          </ViewsButton>
        </LookTools>
      </LookRow>
      <Main>
        <Places>
          <PlaceList>
            {places.map((p) => (
              <Place key={p}>
                <PlaceIcon $selected={p === "Documents"}>
                  {p === "Historique" ? <HistoryIcon /> : <FolderLarge docs={p === "Documents"} />}
                </PlaceIcon>
                {p}
              </Place>
            ))}
          </PlaceList>
          <VScroll>
            <ScrollStep aria-label="Haut"><Arrow dir="up" w={9} fill="#444" /></ScrollStep>
            <Thumb $axis="y" $before={23} $size={137}><Grip /></Thumb>
            <Spacer />
            <ScrollStep aria-label="Bas"><Arrow w={9} fill="#444" /></ScrollStep>
          </VScroll>
        </Places>
        <Center>
          <FileBox>
            <FileScroller>
              <FileTable>
                <colgroup>
                  <col />
                  <col width="109" />
                </colgroup>
                <thead>
                  <tr>
                    <th>
                      <HeadCell>
                        <span>Nom</span>
                        <Arrow dir="up" w={9} fill="#5d8fb5" />
                      </HeadCell>
                    </th>
                    <th>Type</th>
                  </tr>
                </thead>
                <tbody>
                  {files.map((f) => (
                    <tr key={f}>
                      <td>
                        <NameCell>
                          <FolderSmall />
                          {f}
                        </NameCell>
                      </td>
                      <td>Dossier de fichi</td>
                    </tr>
                  ))}
                </tbody>
              </FileTable>
            </FileScroller>
            <VScroll>
              <ScrollStep aria-label="Haut"><Arrow dir="up" w={9} fill="#444" /></ScrollStep>
              <Thumb $axis="y" $before={0} $size={178}><Grip /></Thumb>
              <Spacer />
              <ScrollStep aria-label="Bas"><Arrow w={9} fill="#444" /></ScrollStep>
            </VScroll>
          </FileBox>
          <HScroll>
            <ScrollStep aria-label="Gauche"><Arrow dir="left" w={9} fill="#444" /></ScrollStep>
            <Thumb $axis="x" $before={2} $size={79}><Grip vertical /></Thumb>
            <Spacer />
            <ScrollStep aria-label="Droite"><Arrow dir="right" w={9} fill="#444" /></ScrollStep>
          </HScroll>
          <NameRow $gap={11}>
            <FieldLabel htmlFor="filename">Nom de fichier:</FieldLabel>
            <Combo $look="plain">
              <input id="filename" type="text" />
              <Arrow />
            </Combo>
          </NameRow>
          <NameRow $gap={6}>
            <FieldLabel htmlFor="filetype">Fichiers de type:</FieldLabel>
            <Combo $look="open">
              <select id="filetype">
                <option>Fichiers DWG&nbsp; (*.dwg)</option>
              </select>
              <Arrow />
            </Combo>
            <TypeMenu role="listbox">
              {fileTypes.map((t, i) => (
                <TypeOption key={t} role="option" aria-selected={i === 2} $active={i === 2}>
                  {t}
                </TypeOption>
              ))}
            </TypeMenu>
          </NameRow>
        </Center>
        <Preview>
          <legend>Aperçu</legend>
        </Preview>
      </Main>
      <Options $gap={0}>
        <Cell $justify="space-between">
          <CheckBox label="Vue active uniquement" />
          <FieldLabel htmlFor="colors">Couleurs:</FieldLabel>
        </Cell>
        <Cell>
          <Combo $w={158}>
            <select id="colors" />
            <Arrow />
          </Combo>
        </Cell>
        <Combo>
          <select aria-label="Positionnement">
            <option>Automatique - Origine à origine</option>
          </select>
          <Arrow />
        </Combo>
      </Options>
      <Options $gap={7}>
        <Cell $justify="flex-end">
          <FieldLabel htmlFor="layers">Calques/niveaux:</FieldLabel>
        </Cell>
        <Cell>
          <Combo $w={158}>
            <select id="layers" />
            <Arrow />
          </Combo>
        </Cell>
        <Combo>
          <select aria-label="Placer au niveau" />
          <Arrow />
        </Combo>
      </Options>
      <Options $gap={7}>
        <Cell $justify="flex-end">
          <FieldLabel htmlFor="units">Unités imp.:</FieldLabel>
        </Cell>
        <Cell $gap={2}>
          <Combo $w={158}>
            <select id="units">
              <option>Détection automatique</option>
            </select>
            <Arrow />
          </Combo>
          <ScaleInput aria-label="Facteur" defaultValue="1.000000" disabled />
        </Cell>
        <CheckBox label="Sélectionner une vue d'orientation" checked />
      </Options>
      <Options $gap={5}>
        <Cell>
          <ToolsButton $w={104}>
            <span>Ou<u>t</u>ils</span>
            <Arrow />
          </ToolsButton>
        </Cell>
        <CheckBox label="Corriger les lignes légèrement décalées par rapport à l'ax" checked />
        <Cell $gap={15}>
          <PushButton $w={112}>
            <span>O<u>u</u>vrir</span>
          </PushButton>
          <PushButton $w={112}>Annuler</PushButton>
        </Cell>
      </Options>
    </Client>
    <GripHolder>
      <svg width="12" height="12" fill="#b5b5b5">
        <path d="M8 0h3v3H8zM4 4h3v3H4zM8 4h3v3H8zM0 8h3v3H0zM4 8h3v3H4zM8 8h3v3H8z" />
      </svg>
    </GripHolder>
  </Dialog>
);

export default function App() {
  return (
    <>
      <GlobalStyle />
      <Page>
        <LeftDock />
        <Revit />
        <LinkDialog />
        <Highlight $x={436} $y={48} $w={108} $h={62} />
        <Highlight $x={232} $y={75} $w={92} $h={136} />
        <Highlight $x={459} $y={763} $w={202} $h={48} />
      </Page>
    </>
  );
}
